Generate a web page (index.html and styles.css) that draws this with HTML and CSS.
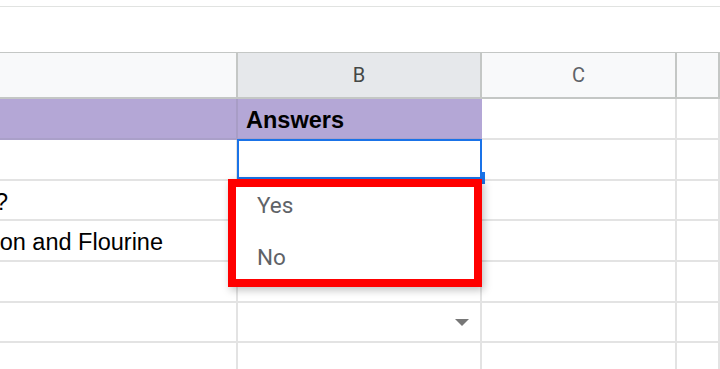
FILE: index.html
```html
<!DOCTYPE html>
<html lang="en">
<head>
<meta charset="utf-8">
<title>Sheet dropdown</title>
<link rel="stylesheet" href="styles.css">
</head>
<body>
<div class="top"></div>
<div class="bar"></div>
<div class="sheet">
  <div class="hd">A</div>
  <div class="hd hd-sel">B</div>
  <div class="hd">C</div>
  <div class="hd"></div>

  <div class="c purple purple-a"></div>
  <div class="c purple txt bold">Answers</div>
  <div class="c"></div>
  <div class="c"></div>

  <div class="c"></div>
  <div class="c"></div>
  <div class="c"></div>
  <div class="c"></div>

  <div class="c txt end end-q"><span class="nw">Is water a compound?</span></div>
  <div class="c"></div>
  <div class="c"></div>
  <div class="c"></div>

  <div class="c txt end end-f"><span class="nw">Name two non-metals: Carbon and Flourine</span></div>
  <div class="c"></div>
  <div class="c"></div>
  <div class="c"></div>

  <div class="c"></div>
  <div class="c"></div>
  <div class="c"></div>
  <div class="c"></div>

  <div class="c"></div>
  <div class="c arrow-cell">
    <svg class="arrow" width="14" height="7" viewBox="0 0 14 7"><path d="M0 0H14L7 7Z" fill="#777"/></svg>
  </div>
  <div class="c"></div>
  <div class="c"></div>

  <div class="c"></div>
  <div class="c"></div>
  <div class="c"></div>
  <div class="c"></div>

  <div class="selection"></div>
  <div class="handle"></div>
  <div class="dropdown">
    <div class="opt">Yes</div>
    <div class="opt">No</div>
  </div>
</div>
</body>
</html>
```

FILE: styles.css
```css
html, body {
  margin: 0;
  padding: 0;
  background: #ffffff;
  overflow: hidden;
  width: 720px;
  height: 369px;
}

.top {
  height: 6px;
  border-bottom: 1px solid #e1e3e1;
}

.bar {
  height: 45px;
}

.sheet {
  position: relative;
  display: grid;
  grid-template-columns: 238px 244px 195px 1fr;
  grid-template-rows: 47px 41px 41px 40px 41px 41px 40px 41px;
}

.hd {
  box-sizing: border-box;
  background: #f8f9fa;
  border-top: 1px solid #c4c7c5;
  border-bottom: 2px solid #c4c7c5;
  border-right: 2px solid #c4c7c5;
  display: flex;
  align-items: center;
  justify-content: center;
  font-family: Roboto, "Noto Sans", sans-serif;
  font-size: 20px;
  color: #5f6368;
}

.hd:first-child {
  color: transparent;
}

.hd-sel {
  background: #e6e8eb;
  color: #444746;
}

.c {
  box-sizing: border-box;
  border-right: 2px solid #e3e3e3;
  border-bottom: 2px solid #e3e3e3;
  overflow: hidden;
  display: flex;
  align-items: flex-end;
}

.purple {
  background: #b4a7d6;
  border-bottom-color: #aaa0c9;
  border-right-color: #b4a7d6;
}

.purple-a {
  border-right-color: #a89dc6;
}

.txt {
  font-family: "Liberation Sans", Arial, sans-serif;
  font-size: 23.5px;
  color: #000000;
  padding-left: 7px;
  padding-bottom: 4px;
}

.bold {
  font-weight: bold;
  font-size: 23.5px;
  padding-left: 8px;
}

.end {
  justify-content: flex-end;
  padding-left: 0;
}

.end-q {
  padding-right: 228px;
  padding-bottom: 3px;
}

.end-f {
  padding-right: 73px;
}

.nw {
  white-space: nowrap;
  flex-shrink: 0;
}

.arrow-cell {
  align-items: center;
  justify-content: flex-end;
  padding-right: 11px;
}

.arrow {
  display: block;
}

.selection {
  position: absolute;
  left: 237px;
  top: 87px;
  width: 245px;
  height: 40px;
  box-sizing: border-box;
  border: 2px solid #1a73e8;
}

.handle {
  position: absolute;
  left: 481px;
  top: 120px;
  width: 4px;
  height: 12px;
  background: #1a73e8;
}

.dropdown {
  position: absolute;
  left: 228px;
  top: 127px;
  width: 254px;
  height: 108px;
  box-sizing: border-box;
  border: 8px solid #ff0000;
  background: #ffffff;
  box-shadow: 2px 3px 8px rgba(0, 0, 0, 0.25);
  display: flex;
  flex-direction: column;
  gap: 16px;
  padding: 0 0 4px 21px;
}

.opt {
  font-family: Roboto, "Noto Sans", sans-serif;
  font-size: 22.5px;
  line-height: 36px;
  color: #5f6368;
}
```
